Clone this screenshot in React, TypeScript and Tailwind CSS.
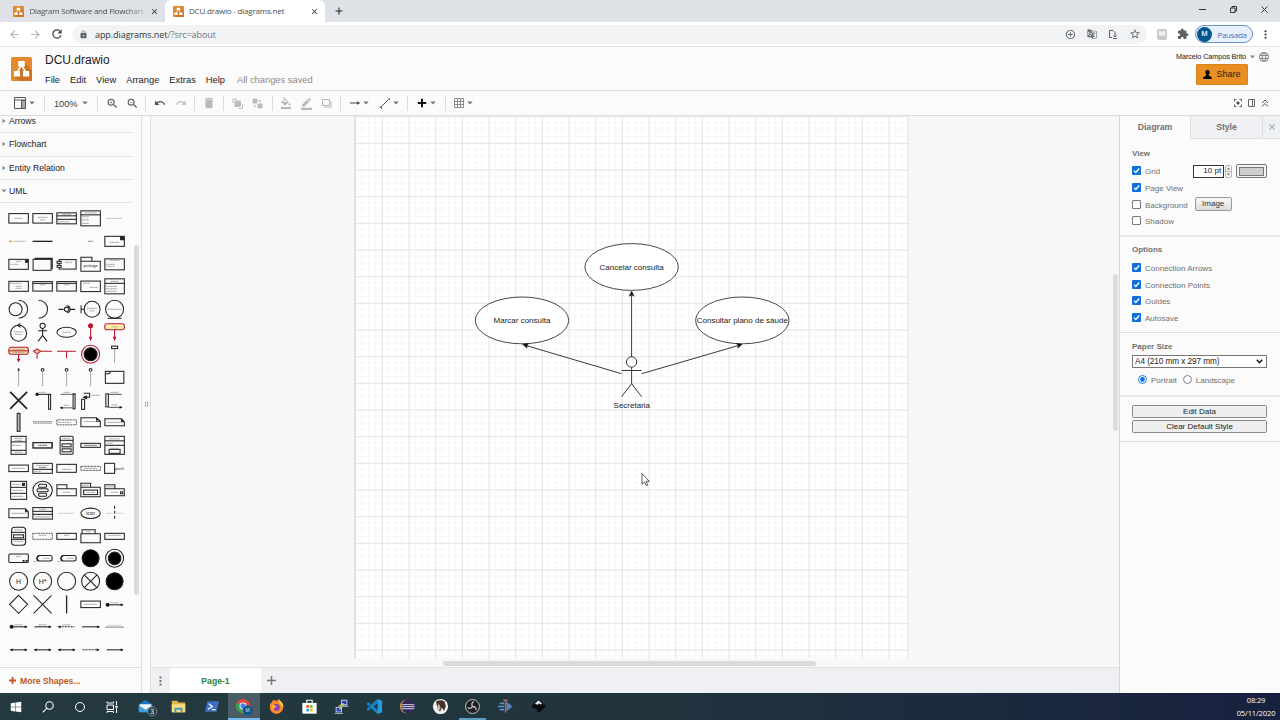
import React from 'react';
import {
  MdAddCircleOutline, MdArrowBack, MdArrowForward, MdClose, MdDelete, MdExtension,
  MdFormatColorFill, MdGTranslate, MdLock, MdMoreVert, MdRedo, MdRefresh, MdStarBorder,
  MdUndo, MdZoomIn, MdZoomOut, MdLanguage, MdAdd, MdBorderColor,
} from 'react-icons/md';
import { FaWindows } from 'react-icons/fa';

// ---------- Browser chrome ----------

const DrawioLogo = ({ className }: { className: string }) => (
  <svg viewBox="0 0 22 24" preserveAspectRatio="none" className={className}>
    <rect width="22" height="24" rx="1.500" fill="#e58a2c" />
    <path d="M14 5l8 9v8.500a1.500 1.500 0 0 1-1.500 1.500H8l-5-5z" fill="#cf7427" />
    <path d="M11 8L6 16M11 8l5 8" stroke="#fff" strokeWidth="1.600" />
    <rect x="7.500" y="4" width="7" height="5.500" rx=".6" fill="#fff" />
    <rect x="3" y="14" width="6.500" height="5.500" rx=".6" fill="#fff" />
    <rect x="12.500" y="14" width="6.500" height="5.500" rx=".6" fill="#fff" />
  </svg>
);

const TabBar = () => (
  <div className="flex h-[22px] shrink-0 bg-[#dee1e6] font-['Open_Sans',sans-serif] text-[8px] text-[#4b4f54]">
    <div className="flex w-[165px] items-center pl-[13px] pr-[6px]">
      <DrawioLogo className="h-[11px] w-[11px] shrink-0" />
      <span className="ml-[5.5px] whitespace-nowrap tracking-[-0.27px] [mask-image:linear-gradient(to_right,black_85%,rgba(0,0,0,0.3))]">
        Diagram Software and Flowchart
      </span>
      <MdClose className="ml-auto h-[9px] w-[9px] shrink-0 text-[#333]" />
    </div>
    <div className="flex w-[160px] items-center rounded-t-md bg-white pl-[8px] pr-[6px]">
      <DrawioLogo className="h-[11px] w-[11px] shrink-0" />
      <span className="ml-[5px] whitespace-nowrap tracking-[-0.2px]">DCU.drawio - diagrams.net</span>
      <MdClose className="ml-auto h-[9px] w-[9px] text-[#333]" />
    </div>
    <div className="flex items-center pl-[8px]">
      <MdAdd className="h-[12px] w-[12px] text-[#222]" />
    </div>
    <div className="ml-auto flex items-center gap-[22px] pb-[3px] pr-[11px]">
      <svg width="9" height="9" stroke="#333" fill="none"><path d="M1 4.500h7" /></svg>
      <svg width="9" height="9" stroke="#333" fill="none"><path d="M1.500 3h4.500v4.500H1.500zM3 3V1.500h4.500V6H6" /></svg>
      <svg width="9" height="9" stroke="#333" fill="none"><path d="M1.500 1.500l6 6M7.500 1.500l-6 6" /></svg>
    </div>
  </div>
);

const AddressBar = () => (
  <div className="flex h-[25px] shrink-0 items-center border-b border-[#e3e4e6] bg-white text-[#5f6368]">
    <MdArrowBack className="ml-[8px] h-[13px] w-[13px] text-[#b4b6b9]" />
    <MdArrowForward className="ml-[8px] h-[13px] w-[13px] text-[#b4b6b9]" />
    <MdRefresh className="ml-[8px] h-[14px] w-[14px] text-[#444]" />
    <div className="ml-[8px] flex h-[19px] w-[1075px] items-center rounded-full bg-[#f1f3f4] pl-[7px] pr-[6px]">
      <MdLock className="h-[9px] w-[9px]" />
      <span className="ml-[7px] pt-px font-['Open_Sans',sans-serif] text-[9px] tracking-[-0.07px] text-[#33363a]">
        app.diagrams.net<span className="text-[#73777c]">/?src=about</span>
      </span>
      <div className="ml-auto flex items-center gap-[11px]">
        <MdAddCircleOutline className="h-[11px] w-[11px]" />
        <MdGTranslate className="h-[10px] w-[10px]" />
        <svg width="10" height="10" fill="none" stroke="currentColor"><path d="M4 8.500H1.500v-7H5L7 3.500V5M7 5v3M5.500 6.500L7 8l1.500-1.500M5 9.500h4" /></svg>
        <MdStarBorder className="h-[12px] w-[12px]" />
      </div>
    </div>
    <div className="ml-[10px] flex h-[11px] w-[10px] items-center justify-center rounded-[2px] bg-[#c9c9c9] font-['Liberation_Sans',sans-serif] text-[8px] font-bold text-white">M</div>
    <MdExtension className="ml-[10px] h-[12px] w-[12px]" />
    <div className="ml-[6px] flex h-[18px] w-[58px] items-center rounded-full border border-[#6d92cb] bg-[#e8f0fb] pl-px">
      <div className="flex h-[15px] w-[15px] items-center justify-center rounded-full bg-[#03568f] font-['Open_Sans',sans-serif] text-[7px] font-semibold text-white">M</div>
      <span className="ml-[5.5px] pt-px font-['Open_Sans',sans-serif] text-[8px] tracking-[-0.4px] text-[#4a72bb]">Pausada</span>
    </div>
    <MdMoreVert className="ml-[6px] h-[13px] w-[13px] text-[#444]" />
  </div>
);

// ---------- App header ----------

const menus = ['File', 'Edit', 'View', 'Arrange', 'Extras', 'Help'];

const Header = () => (
  <div className="flex h-[44px] shrink-0 border-b border-[#dedede] bg-[#fbfbfb]">
    <DrawioLogo className="ml-[11px] mt-[10px] h-[24px] w-[21px]" />
    <div className="ml-[13px] pt-[6px]">
      <div className="text-[12px] leading-[14px] text-[#1b1b1b]">DCU.drawio</div>
      <div className="mt-[5.5px] flex gap-[10px] text-[9.33px] leading-[14px] text-[#222]">
        {menus.map((m) => (
          <span key={m}>{m}</span>
        ))}
        <span className="ml-[2px] text-[#8c8c8c]">All changes saved</span>
      </div>
    </div>
    <div className="ml-auto flex flex-col items-end pr-[10px] pt-[4px]">
      <div className="flex h-[11px] items-center text-[7.33px] text-[#222]">
        <span className="whitespace-nowrap pt-px tracking-[-0.13px]">Marcelo Campos Brito</span>
        <svg width="5" height="4" className="ml-[4px]"><path d="M0 .5h5L2.500 3.500z" fill="#888" /></svg>
        <MdLanguage className="ml-[3px] h-[12px] w-[12px] text-[#8a8a8a]" />
      </div>
      <button className="mr-[22px] mt-[2px] flex h-[21px] w-[52px] items-center justify-center gap-[4px] rounded-[1px] border border-[#d8841f] bg-[#e88e22] text-[9px] text-[#33230f]">
        <svg width="9" height="9" fill="#000"><path d="M4.500 0c1.600 0 2.300 1.200 2.100 2.500C6.500 3.700 6 4.300 5.700 4.800v1c1.300.5 3.300.8 3.300 3.200H0C0 6.600 2 6.300 3.300 5.800v-1C3 4.300 2.500 3.700 2.400 2.500 2.200 1.200 2.900 0 4.500 0z" /></svg>
        Share
      </button>
    </div>
  </div>
);

// ---------- Toolbar ----------

const Caret = ({ className = '' }: { className?: string }) => (
  <svg width="6" height="4" className={`shrink-0 ${className}`}><path d="M.3 .5h5.400L3 3.500z" fill="#777" /></svg>
);

const Sep = () => <div className="h-[15px] w-px shrink-0 bg-[#dcdcdc]" />;

const Toolbar = () => (
  <div className="flex h-[25px] shrink-0 items-center border-b border-[#dcdcdc] bg-[#fbfbfb] text-[#555]">
    <div className="flex w-[44px] items-center pl-[14px]">
      <svg width="12" height="12" fill="none" stroke="#555"><path d="M.5 .5h11v11H.500zM.5 3h11" /><path d="M7.500 3.500h4v8h-4z" fill="#aaa" /></svg>
      <Caret className="ml-[3px]" />
    </div>
    <Sep />
    <div className="flex w-[52px] items-center pl-[9px] text-[9.33px] text-[#444]">
      <span className="pt-[2px] leading-[11px] tracking-[-0.1px]">100%</span>
      <Caret className="ml-[5px]" />
    </div>
    <Sep />
    <div className="flex w-[47px] items-center gap-[7px] pl-[8px]">
      <MdZoomIn className="h-[13px] w-[13px]" />
      <MdZoomOut className="h-[13px] w-[13px]" />
    </div>
    <Sep />
    <div className="flex w-[48px] items-center gap-[9px] pl-[8px]">
      <MdUndo className="h-[12px] w-[12px]" />
      <MdRedo className="h-[12px] w-[12px] text-[#c4c4c4]" />
    </div>
    <Sep />
    <div className="flex w-[28px] items-center justify-center text-[#b9b9b9]">
      <MdDelete className="h-[14px] w-[14px]" />
    </div>
    <Sep />
    <div className="flex w-[48px] items-center gap-[9px] pl-[8px]">
      <svg width="11" height="11" fill="none" stroke="#bdbdbd"><path d="M3 3h5.500v5.500H3z" fill="#bdbdbd" /><path d="M1 5V1h4M10.500 6.500v4h-4" /></svg>
      <svg width="11" height="11" fill="none" stroke="#bdbdbd"><path d="M1 1h4v4H1zM6 6h4v4H6z" fill="#bdbdbd" /><path d="M6.500 2.500h2v2M2.500 6.500v2h2" /></svg>
    </div>
    <Sep />
    <div className="flex w-[67px] items-center gap-[8px] pl-[7px] text-[#b8b8b8]">
      <MdFormatColorFill className="h-[12px] w-[12px]" />
      <MdBorderColor className="h-[13px] w-[13px]" />
      <svg width="11" height="10" fill="none"><path d="M3 9h7V3" stroke="#cfcfcf" strokeWidth="1.500" /><path d="M1.500 1.500h7v6h-7z" stroke="#b5b5b5" /></svg>
    </div>
    <Sep />
    <div className="flex w-[66px] items-center pl-[9px]">
      <svg width="11" height="6" fill="#444"><path d="M0 2.500h8v.9H0zM7 1.200L10.300 3 7 4.800z" /></svg>
      <Caret className="ml-[2px]" />
      <svg width="11" height="11" className="ml-[10px]" stroke="#555" fill="none"><path d="M1.500 9.500l8-8" /><path d="M.5 9h2v2M8.500 0h2v2" strokeWidth=".8" /></svg>
      <Caret className="ml-[2.5px]" />
    </div>
    <Sep />
    <div className="flex w-[37px] items-center pl-[9px]">
      <svg width="10" height="10" stroke="#111" strokeWidth="2"><path d="M5 .8v8.400M.8 5h8.400" /></svg>
      <Caret className="ml-[3px]" />
    </div>
    <Sep />
    <div className="flex items-center pl-[8px]">
      <svg width="10" height="10" stroke="#777" fill="none"><path d="M.5 .5h9v9h-9zM3.500 .5v9M6.500 .5v9M.5 3.500h9M.5 6.500h9" strokeWidth=".8" /></svg>
      <Caret className="ml-[3px]" />
    </div>
    <div className="ml-auto flex items-center gap-[6px] pr-[11px]">
      <svg width="8" height="8" fill="none" stroke="#555"><path d="M.5 2.500v-2h2M5.500 .5h2v2M7.500 5.500v2h-2M2.500 7.500h-2v-2" /><path d="M3 3h2v2H3z" fill="#444" /></svg>
      <svg width="7" height="8" fill="none" stroke="#666"><path d="M.5 .5h6v7h-6zM4.500 .5v7" /></svg>
      <svg width="8" height="8" fill="none" stroke="#555"><path d="M1 4l3-3 3 3M1 7.500l3-3 3 3" /></svg>
    </div>
  </div>
);

// ---------- UML palette ----------

const Box = ({ x = 0, y = 0, w = 19.5, h = 9.5, ...rest }: any) => (
  <rect x={x - w / 2} y={y - h / 2} width={w} height={h} {...rest} />
);
// illegible caption inside a thumbnail
const Cap = ({ x = 0, y = 0, w = 8, c = '#888' }: { x?: number; y?: number; w?: number; c?: string }) => (
  <path d={`M${x - w / 2} ${y}h${w}`} stroke={c} strokeWidth=".8" strokeDasharray="1.300 .3" />
);
const Rule = ({ y, w = 19.5 }: { y: number; w?: number }) => <path d={`M${-w / 2} ${y}h${w}`} />;
const Txt = ({ s, size, y = 0, x = 0 }: { s: string; size: number; y?: number; x?: number }) => (
  <text x={x} y={y} fontSize={size} textAnchor="middle" stroke="none" fill="#222">{s}</text>
);
const Plain = () => <><Box /><Cap /></>;
const Arrow = ({ dot = false, left = false, right = true, dash = false, cap = true, w = 16 }: any) => (
  <>
    <path d={`M${-w / 2} .5h${w}`} strokeDasharray={dash ? '2 1' : undefined} />
    {dot && <circle cx={-w / 2 + 1} cy=".5" r="1.500" fill="#111" />}
    {left && <path d={`M${-w / 2 - 1} .5l3-1.300v2.600z`} fill="#111" stroke="none" />}
    {right && <path d={`M${w / 2 + 1} .5l-3-1.300v2.600z`} fill="#111" stroke="none" />}
    {cap && <Cap y={-1.5} w={8} />}
  </>
);
const Folder = ({ children }: { children?: React.ReactNode }) => (
  <><path d="M-9.700-1.500v-4h10v4M-9.700-1.500H9.700v7H-9.700z" />{children}</>
);
const red = '#b8142f';

const shapes: React.ReactNode[] = [
  // row 1
  <Plain />,
  <><Box /><Cap y={-1} w={10} /><Cap y={1.5} w={5} /></>,
  <><Box h={11} /><Rule y={-2.5} /><Rule y={1} /><Cap y={-4} w={9} /><Cap x={-3} y={3.500} w={11} /></>,
  <><Box h={15} /><Rule y={-3.5} /><Cap y={-5.5} w={12} /><Cap x={-5} y={-1.5} w={7} /><Cap x={-5} y={1.500} w={7} /><Cap x={-5} y={5} w={7} /></>,
  <Cap w={16} c="#aaa" />,
  // row 2
  <><circle cx="-8" r="1.200" fill="#d9a441" stroke="none" /><Cap x={1} w={13} c="#a89a80" /></>,
  <path d="M-10 0h20" strokeWidth="1.300" />,
  <></>,
  <Cap w={5} c="#555" />,
  <><Box h={10} /><path d="M6-4.500h3v3H6z" fill="#222" /><Cap y={1} w={9} /></>,
  // row 3
  <><Box h={10} /><path d="M7-4h2v2H7z" fill="#222" /><Cap y={-3} w={6} /><Cap x={-4} y={0} w={8} /></>,
  <><Box x={-.5} y={.5} w={18} h={11} /><path d="M-8-6H9.500v11" strokeWidth="1.400" /></>,
  <><Box x={1} w={17} /><Box x={-7.5} y={-2} w={4} h={2} fill="#fff" /><Box x={-7.5} y={2} w={4} h={2} fill="#fff" /><Cap x={2} y={-2} w={7} /></>,
  <><path d="M-9.700-3v-4h11v4M-9.700-3H9.700v10H-9.700z" /><Txt s="package" size={3.8} y={2.6} /></>,
  <><Box h={11} /><Cap y={-4} w={10} /><Cap x={-4} y={0} w={9} /><Cap x={-4} y={2} w={8} /></>,
  // row 4
  <><Box h={10} /><Cap x={-3} y={-3} w={12} /><Cap y={0} w={6} /><Cap y={2} w={6} /></>,
  <><Box /><Rule y={-3} /><Cap y={-1.5} w={6} /></>,
  <><Box /><Rule y={-3} /><Cap y={-1.5} w={6} /></>,
  <><Box h={10.500} /><Cap x={-4} y={-3} w={7} /><Cap x={3} y={1} w={8} /></>,
  <><Box h={15} /><Rule y={-3} /><Cap y={-5} w={8} /><Cap x={-3} y={0} w={11} /><Cap x={-3} y={2.500} w={11} /><Cap x={-3} y={5} w={10} /></>,
  // row 5
  <><circle cx="-3" r="6.500" /><path d="M0-9a9 9 0 0 1 0 18" /></>,
  <path d="M-4-9a9 9 0 0 1 0 18" />,
  <><path d="M-8 0h5M3.500 0h5" strokeWidth="1.300" /><circle r="2.200" /><path d="M0-3.500a3.500 3.500 0 0 1 0 7" /></>,
  <><circle cx="1.500" r="8" /><path d="M-6.500 0h-3M-9.500-4v8" /><Cap x={1.5} y={-1} w={10} /><Cap x={1.5} y={1.500} w={5} /></>,
  <><circle r="9" /><path d="M-7 9H7" /><Cap w={14} /></>,
  // row 6
  <><circle cy="1" r="8" /><path d="M2-9l-3 2 3 2" /><Cap y={-.5} w={9} /><Cap y={2} w={7} /></>,
  <><circle cy="-6.500" r="2.600" /><path d="M0-4v7M-4.500-1.500h9M0 3l-4.500 6M0 3l4.500 6" /></>,
  <><ellipse rx="9.700" ry="5" /><Cap w={8} /></>,
  <g stroke={red}><circle cy="-6.500" r="2" fill={red} /><path d="M0-5v11" /><path d="M0 7.500l-1-2.500h2z" fill={red} /></g>,
  <g stroke={red}><Box y={-5.5} h={6} rx={2} fill="#fff2a8" /><Cap y={-5.500} w={6} /><path d="M0-2.500v9" /><path d="M0 7.500l-1-2.500h2z" fill={red} /></g>,
  // row 7
  <g stroke={red}><Box y={-3.500} h={7} rx={2.5} fill="#ffe7a8" /><Cap y={-5} w={12} /><Rule y={-3.500} /><Cap y={-2} w={12} /><path d="M0 0v5" /><path d="M0 7l-1-2h2z" fill={red} /></g>,
  <g stroke={red}><path d="M-5.500-5.500l3.500 2.500-3.500 2.500L-9-3zM-2-3H9.500M-5.500-.5v5" fill="#f6c9a0" /></g>,
  <g stroke={red}><path d="M-9.500-3h19M0-3v7" /></g>,
  <><circle r="9" stroke={red} /><circle r="6.500" fill="#000" /></>,
  <><Box y={-7} w={6} h={2.500} /><path d="M0-5.500V9" stroke="#aaa" /></>,
  // row 8
  <><path d="M0-9v3" strokeWidth="1.500" /><path d="M0-5V9" stroke="#aaa" /></>,
  <><circle cy="-7.500" r="1.400" /><path d="M0-6V9" stroke="#aaa" /></>,
  <><circle cy="-7.500" r="1.400" /><path d="M0-6V9" stroke="#aaa" /></>,
  <><circle cy="-7.500" r="1.400" /><path d="M0-6V9" stroke="#aaa" /></>,
  <><Box w={18.500} h={12} /><path d="M-9-3.500h3.500L-4.500-5V-6" /></>,
  // row 9
  <path d="M-8.500-8.500l17 17M8.500-8.500l-17 17" strokeWidth="1.700" />,
  <><path d="M-6-6H6" /><circle cx="-5.500" cy="-6" r="1.200" fill="#111" /><Cap y={-8} w={7} /><Box x={7} y={1.500} w={2} h={15} /></>,
  <><path d="M-6-6H8M-6 7.500H6" strokeWidth=".7" /><path d="M-7 7.500l3-1.300v2.600z" fill="#111" stroke="none" /><Cap y={5} w={5} /><Cap y={-8} w={6} /><Box x={7.500} y={1} w={2} h={15} /></>,
  <><path d="M-7-7h6v4h-5" /><path d="M-7-3l3-1.300v2.600z" fill="#111" /><Box x={-7.500} y={4} w={3} h={10} /><Cap x={5} y={-5} w={9} /></>,
  <><path d="M-6-6H7M-6 7H7" strokeWidth=".8" /><path d="M8 7L5 5.700v2.600z" fill="#111" stroke="none" /><Cap y={-8} w={8} /><Cap y={4.500} w={6} /><Box x={-7.500} y={0} w={2.500} h={13} /></>,
  // row 10
  <Box w={2.8} h={18} fill="#bbb" />,
  <><Cap y={-.7} w={19} c="#666" /><Cap y={.8} w={19} c="#666" /></>,
  <><Box h={5} strokeDasharray="2 .6" strokeWidth=".7" /><Cap x={-2} w={13} /></>,
  <><path d="M-9.700-4.500H6l3.700 3.500v5.500H-9.700zM6-4.500V-1h3.700" /><Cap y={-.8} w={13} /></>,
  <><path d="M-9.700-3.500H7L9.700-.5v4H-9.700zM7-3.500v3h2.700" /><Cap y={0} w={14} /></>,
  // row 11
  <><Box w={15} h={18} /><Rule y={-3.500} w={15} /><Rule y={5} w={15} /><Cap y={-7} w={8} /><Cap y={-5} w={7} /><Cap x={-2} y={0} w={9} /><Cap y={7} w={8} /></>,
  <><Box h={5.500} /><Box w={17.500} h={5} strokeWidth=".6" /><Cap w={9} c="#333" /></>,
  <><Box w={13} h={18} rx={1} /><Cap y={-7} w={8} /><Rule y={-5} w={13} /><Box y={0} w={9} h={3} /><Box y={5} w={9} h={3} /></>,
  <><Box h={4} /><Cap w={13} c="#333" /></>,
  <><Box h={18} /><Cap y={-6.500} w={11} /><Rule y={-4.500} /><Cap x={-5} y={-2} w={6} /><Rule y={0} /><Box y={6} w={11} h={4} /><Cap y={3} w={8} /></>,
  // row 12
  <><Box h={6.500} /><Cap w={13} /></>,
  <><Box h={10} /><Cap y={-3} w={13} /><Cap y={-1} w={7} c="#333" /><Rule y={1} /><Cap x={-5} y={3} w={7} /></>,
  <><Box h={8} /><Cap y={1} w={9} /></>,
  <><Box h={4} strokeDasharray="2.500 .7" strokeWidth=".7" /><Cap w={13} /></>,
  <><Box x={-5} w={10} h={10} /><Txt s="port1" size={4} x={5} y={1.3} /></>,
  // row 13
  <><Box w={16} h={18} /><Rule y={-3} w={16} /><Rule y={3} w={16} /><Box x={5} y={-6} w={2} h={2} fill="#222" /><Cap x={-2} y={-6} w={9} /><Cap x={-1} y={0} w={11} /><Cap x={-1} y={6} w={11} /></>,
  <><ellipse rx="9.700" ry="9" /><Box y={-4.500} w={8} h={3} rx={1} /><Box y={0} w={11} h={3} rx={1} /><Box y={4.500} w={8} h={3} rx={1} /></>,
  <Folder><Cap y={2} w={7} /></Folder>,
  <><path d="M-9.700-3v-4H0v4M-9.700-3H9.700v9.500H-9.700z" /><Cap x={-5} y={-5} w={7} /><Box y={2} w={14} h={4.500} /><Cap y={2} w={9} /></>,
  <Folder><Cap y={2} w={7} /><Cap x={-4} y={-3.5} w={8} /><path d="M6 1.500h2v2H6z" /></Folder>,
  // row 14
  <><path d="M-9.700-4.500H7L9.700-1.500v6H-9.700zM7-4.500v3h2.700" /><Cap y={0} w={14} /></>,
  <><Box h={11.500} /><Rule y={-2} /><Rule y={1} /><Cap y={-4} w={7} /><Cap y={3.500} w={16} /></>,
  <Cap w={16} c="#bbb" />,
  <><ellipse rx="9.700" ry="5.200" /><Txt s="icon" size={4.8} y={1.6} /></>,
  <><path d="M0-7.500v15" strokeDasharray="3 2" /><Cap w={17} c="#bbb" /></>,
  // row 15
  <><Box w={14} h={18} rx={3} /><Rule y={-4} w={14} /><Box y={0} w={10} h={3} /><Rule y={3} w={14} /><Cap y={-6.500} w={8} /><Cap y={5} w={10} /></>,
  <><Box h={6} strokeDasharray="2 .6" strokeWidth=".7" /><Cap y={-1} w={8} /></>,
  <><Box h={6} /><Cap y={-1} w={5} /></>,
  <><path d="M-8.500-2.500V-6.500h13v4M-9.700-2.500H9.700v9H-9.700z" /><Cap x={-2} y={-4.500} w={5} /></>,
  <><Box h={6} /><Cap y={-1} w={13} /></>,
  // row 16
  <><Box h={8.500} rx={1} /><Cap y={-2} w={5} /><path d="M4 2.500h2M7 2.500h2" strokeWidth="1.600" /></>,
  <><Box x={2} w={15} h={5.500} rx={2} /><path d="M-3.500-2.500l-2.500 2.500 2.500 2.500" /><Cap x={4} w={7} /><Cap x={-7} y={3} w={4} /></>,
  <><Box x={2} w={15} h={5.500} rx={2} /><path d="M-3.500-2.500l-2.500 2.500 2.500 2.500" /><Cap x={4} w={7} /><Cap x={-7} y={3} w={4} /></>,
  <circle r="8.500" fill="#000" />,
  <><circle r="9" /><circle r="6.300" fill="#000" /></>,
  // row 17
  <><circle r="9" /><Txt s="H" size={7} y={2.5} /></>,
  <><circle r="9" /><Txt s="H*" size={7} y={2.5} /></>,
  <circle r="9" />,
  <><circle r="9" /><path d="M-6.400-6.400l12.800 12.800M6.400-6.400L-6.400 6.400" /></>,
  <circle r="8.500" fill="#000" />,
  // row 18
  <path d="M0-9l9 9-9 9-9-9z" />,
  <path d="M-9-9L9 9M9-9L-9 9" />,
  <path d="M0-9V9" strokeWidth="1.300" />,
  <><Box h={6.500} /><Cap w={13} /></>,
  <Arrow dot left />,
  // rows 19 and 20
  <Arrow dot />, <Arrow />, <Arrow left right={false} dash />, <Arrow cap={false} w={17} />, <><path d="M-9.500 .8h19" stroke="#888" /><Cap y={-1} w={14} c="#bbb" /></>,
  <Arrow left cap={false} />, <Arrow left cap={false} />, <Arrow left cap={false} />, <Arrow dash cap={false} />, <Arrow cap={false} />,
];

const Palette = () => (
  <div className="ml-[7px] mt-[4px] grid w-[120px] grid-cols-[repeat(5,24px)]">
    {shapes.map((s, i) => (
      <svg key={i} viewBox="-11.600 -11.340 24 22.680" className="h-[22.68px] w-[24px] overflow-visible" fill="none" stroke="#222" strokeWidth="1.050">
        {s}
      </svg>
    ))}
  </div>
);

const Sidebar = () => (
  <div className="flex w-[142px] shrink-0 flex-col border-r border-[#dedede] bg-[#fbfbfb]">
    <div className="flex h-[551px] overflow-hidden">
      <div className="-mt-[6px] w-[132px] shrink-0">
        {['Arrows', 'Flowchart', 'Entity Relation', 'UML'].map((name) => (
          <div key={name} className="flex h-[23.3px] items-center border-b border-[#e4e4e4] text-[8.67px] text-[#222]">
            <svg width="7" height="6" className="ml-[1px] mr-[1px]" fill="#888">
              {name === 'UML' ? <path d="M.5 1.500h5L3 4.500z" /> : <path d="M1.500 .7l3 2.300-3 2.300z" />}
            </svg>
            <span className="pt-px">{name}</span>
          </div>
        ))}
        <Palette />
      </div>
      <div className="ml-[2px] mt-[129px] h-[350px] w-[5px] rounded-full bg-[#dadada]" />
    </div>
    <div className="flex flex-1 items-center border-t border-[#dedede] pl-[9px] text-[8.67px] font-bold text-[#bf5a1e]">
      <svg width="7" height="7" stroke="currentColor" strokeWidth="1.800"><path d="M3.500 0v7M0 3.500h7" /></svg>
      <span className="ml-[4px] pt-[2px] tracking-[-0.05px]">More Shapes...</span>
    </div>
  </div>
);

// ---------- Diagram ----------

const UseCase = ({ x, y, label }: { x: number; y: number; label: string }) => (
  <g>
    <ellipse cx={x} cy={y} rx="46.700" ry="23.400" fill="#fff" stroke="#333" strokeWidth=".9" />
    <text x={x} y={y + 3} textAnchor="middle" fontSize="8" fill="#222">{label}</text>
  </g>
);

// viewBox uses window coordinates of the canvas area
const Canvas = () => (
  <svg viewBox="151 116 962 542" className="h-[542px] w-[962px]">
    <defs>
      <pattern id="grid" x="355.200" y="116.200" width="26.667" height="26.667" patternUnits="userSpaceOnUse">
        <path d="M6.670 0v26.670M13.330 0v26.670M20 0v26.670M0 6.670h26.670M0 13.330h26.670M0 20h26.670" stroke="#f5f5f5" strokeWidth=".9" />
        <path d="M.5 0v26.670M0 .5h26.670" stroke="#e3e3e3" strokeWidth="1" />
      </pattern>
    </defs>
    <rect x="355" y="116" width="553" height="542" fill="#fff" />
    <rect x="355" y="116" width="553" height="542" fill="url(#grid)" />
    <path d="M354.500 658V116M908 116v542" stroke="#dcdfdf" fill="none" />
    <UseCase x={631.6} y={267} label="Cancelar consulta" />
    <UseCase x={522} y={320.4} label="Marcar consulta" />
    <UseCase x={742.3} y={320.4} label="Consultar plano de sáude" />
    <g stroke="#222" strokeWidth=".9" fill="none">
      <path d="M631.600 357V294M621.500 373.700L526 345.500M641.700 373.700L738.500 345.500" />
      <path d="M631.600 291l-2.600 5.300 2.600-1.300 2.600 1.300zM522.500 344.300l4.500 4 .1-2.700 1.700-2.200zM742.300 344.300l-6-.9 1.700 2.200-.2 2.600z" fill="#111" strokeWidth=".4" />
      <circle cx="631.600" cy="362" r="5.200" fill="#fff" />
      <path d="M631.600 367.300v16.400M621.500 370.500h20.200M631.600 383.700l-10 13M631.600 383.700l10 13" />
    </g>
    <text x="631.800" y="408.300" textAnchor="middle" fontSize="8" fill="#222">Secretaria</text>
    <path d="M642 473.500v10.800l2.500-2.300 1.800 3.700 1.500-.7-1.700-3.600h3.200z" fill="#fff" stroke="#333" strokeWidth=".8" />
  </svg>
);

const Editor = () => (
  <div className="flex w-[977px] shrink-0 bg-[#fbfbfb]">
    {/* splitter grip */}
    <div className="flex w-[8px] items-center justify-center">
      <svg width="3" height="5" stroke="#888"><path d="M.5 0v5M2.500 0v5" strokeDasharray="1 .5" /></svg>
    </div>
    <div className="flex w-[969px] shrink-0 flex-col border-l border-[#dedede] bg-[#f7f9f8]">
      <div className="flex h-[542px]">
        <Canvas />
        <div className="mt-[158px] h-[157px] w-[5px] rounded-full bg-[#dcdedd]" />
      </div>
      <div className="flex h-[9px] items-center pt-[2px]">
        <div className="ml-[292px] h-[5px] w-[373px] rounded-full bg-[#d9dbdb]" />
      </div>
      <div className="flex flex-1 items-stretch border-t border-[#dfe1e3] bg-[#eef0f3]">
        <div className="flex w-[19px] items-center justify-center">
          <svg width="3" height="10" fill="#777"><path d="M.5 .5h2v2h-2zM.5 4h2v2h-2zM.5 7.500h2v2h-2z" /></svg>
        </div>
        <div className="flex w-[91px] items-center justify-center bg-white pt-px text-[8.67px] font-bold text-[#2b8243]">Page-1</div>
        <div className="flex w-[21px] items-center justify-center">
          <svg width="9" height="9" stroke="#777" strokeWidth="1.500"><path d="M4.500 0v9M0 4.500h9" /></svg>
        </div>
      </div>
    </div>
  </div>
);

// ---------- Format panel ----------

const Check = ({ on }: { on?: boolean }) =>
  on ? (
    <svg width="9" height="9" className="mb-px"><rect width="9" height="9" rx="1" fill="#0f6fdc" /><path d="M2 4.600l1.800 1.900L7.200 2.500" fill="none" stroke="#fff" strokeWidth="1.300" /></svg>
  ) : (
    <div className="mb-px h-[9px] w-[9px] rounded-[1px] border border-[#777] bg-white" />
  );

const Option = ({ label, on, children }: { label: string; on?: boolean; children?: React.ReactNode }) => (
  <div className="flex h-[16.7px] items-center">
    <Check on={on} />
    <span className="ml-[4px] pt-[2px]">{label}</span>
    {children}
  </div>
);

const Radio = ({ on }: { on?: boolean }) => (
  <svg width="9" height="9" className="mb-px" fill="#fff">
    <circle cx="4.500" cy="4.500" r="4" stroke={on ? '#0f6fdc' : '#777'} strokeWidth=".9" />
    {on && <circle cx="4.500" cy="4.500" r="2.400" fill="#0f6fdc" />}
  </svg>
);

const FormatPanel = () => (
  <div className="flex flex-1 flex-col border-l border-[#d5d5d5] bg-[#fbfbfb] text-[8px] text-[#707070]">
    <div className="flex h-[23px] shrink-0 text-[8.67px] font-bold">
      <div className="flex w-[71px] items-center justify-center border-r border-[#dfdfdf]">Diagram</div>
      <div className="flex w-[72px] items-center justify-center border-b border-r border-[#dcdfe3] bg-[#eef0f4]">Style</div>
      <div className="flex flex-1 items-center justify-center border-b border-[#dcdfe3] bg-[#eef0f4]">
        <svg width="6" height="6" stroke="#9db0c6" strokeWidth="1.200"><path d="M.5 .5l5 5M5.500 .5l-5 5" /></svg>
      </div>
    </div>
    <div className="h-[98px] border-b-2 border-[#e9e9e9] pl-[12px] pt-[9px]">
      <div className="mb-[4px] h-[11px] font-bold leading-[11px]">View</div>
      <Option label="Grid" on>
        <div className="ml-[33px] flex h-[13px] w-[31px] items-center justify-end border border-[#333] bg-white pr-[2px] text-[#222]">10 pt</div>
        <svg width="7" height="13" className="ml-[1px]" fill="#f4f4f4" stroke="#aaa" strokeWidth=".8"><rect x=".5" y=".5" width="6" height="12" rx="1.500" /><path d="M.5 6.500h6" /><path d="M2 4.500l1.500-2 1.500 2zM2 8.500l1.500 2 1.500-2z" fill="#666" stroke="none" /></svg>
        <div className="ml-[4px] flex h-[14px] w-[31px] items-center justify-center rounded-[2px] border border-[#777] bg-[#f4f4f4]">
          <div className="h-[9px] w-[25px] border border-[#777] bg-[#cfcfcf]" />
        </div>
      </Option>
      <Option label="Page View" on />
      <Option label="Background">
        <button className="mb-[2px] ml-[7px] flex h-[14px] w-[37px] items-center justify-center rounded-[2px] border border-[#999] bg-gradient-to-b from-[#f8f8f8] to-[#dcdcdc] text-[#333]">Image</button>
      </Option>
      <Option label="Shadow" />
    </div>
    <div className="h-[96px] border-b border-[#dedede] pl-[12px] pt-[7px]">
      <div className="mb-[4.5px] h-[11px] font-bold leading-[11px]">Options</div>
      <Option label="Connection Arrows" on />
      <Option label="Connection Points" on />
      <Option label="Guides" on />
      <Option label="Autosave" on />
    </div>
    <div className="h-[64px] border-b-2 border-[#e9e9e9] pl-[12px] pt-[8px]">
      <div className="mb-[3px] h-[11px] font-bold leading-[11px]">Paper Size</div>
      <div className="flex h-[13px] w-[135px] items-center justify-between border border-[#777] bg-white pl-[2px] pr-[3px] text-[8.200px] text-[#222]">
        <span className="pt-px tracking-[-0.05px]">A4 (210 mm x 297 mm)</span>
        <svg width="7" height="5" fill="none" stroke="#111" strokeWidth="1.500"><path d="M.8 .8L3.500 3.700 6.200 .8" /></svg>
      </div>
      <div className="ml-[6px] mt-[4px] flex h-[16px] items-center">
        <Radio on />
        <span className="ml-[4px] pt-px">Portrait</span>
        <span className="ml-[6px]" />
        <Radio />
        <span className="ml-[4px] pt-px">Landscape</span>
      </div>
    </div>
    <div className="flex h-[45px] flex-col gap-[2px] border-b border-[#dedede] pl-[12px] pt-[8px]">
      {['Edit Data', 'Clear Default Style'].map((b) => (
        <button key={b} className="h-[13px] w-[135px] rounded-[1.500px] border border-[#888] bg-[#efefef] text-[8px] leading-[11px] text-[#222]">{b}</button>
      ))}
    </div>
  </div>
);

// ---------- Windows taskbar ----------

const taskIcons: React.ReactNode[] = [
  // mail
  <><path d="M2 7l7-5 8 5v9H2z" fill="#1b74bd" /><path d="M3 7h13v4l-6.500 3L3 11z" fill="#f2f7fb" /><path d="M2 8l7.500 5L17 8v8H2z" fill="#3aa0e0" /><circle cx="17" cy="15" r="5" fill="#28373c" stroke="#98a2a5" strokeWidth=".8" /><text x="17" y="17.800" fontSize="7.500" textAnchor="middle" fill="#fff">3</text></>,
  // explorer
  <><path d="M2 3h6l1.500 2H17v11H2z" fill="#e5b544" /><path d="M2 7h15v9H2z" fill="#fbdc7b" /><path d="M5 16v-5h9v5h-2v-3H7v3z" fill="#4b95c4" /></>,
  // powershell
  <><path d="M5 3.500h13L15 15.500H2z" fill="#3c6fc4" /><path d="M6.500 6.500l4 3-5 3M10 13h4" stroke="#fff" strokeWidth="1.300" fill="none" /></>,
  // chrome
  <><circle cx="9" cy="9" r="8" fill="#e04b3b" /><path d="M9 9L2 5.200A8 8 0 0 0 8.500 17z" fill="#36a257" /><path d="M9 9h8a8 8 0 0 1-8.500 8z" fill="#f3c331" /><circle cx="9" cy="9" r="3.900" fill="#fff" /><circle cx="9" cy="9" r="3" fill="#4484e8" /><circle cx="14" cy="14" r="5.500" fill="#10578f" /><text x="14" y="16" fontSize="5.500" textAnchor="middle" fill="#dde">M</text></>,
  // firefox
  <><circle cx="9.500" cy="10" r="7.500" fill="#f2662f" /><path d="M2.500 6c1 1 2 0 3-4 2 2 8 1 10 5 3 5-1 10.500-6 10.500S1 13 2.500 6z" fill="#f98b2b" /><path d="M11 1c4 2 7 6 6 10C15 7 12 6 11 1z" fill="#ffcf3f" /><circle cx="9.500" cy="10.500" r="3.700" fill="#8a3fb4" /><path d="M4 8c3-1 4 1 6 1-1 2-4 1-3 4-2-1-3-3-3-5z" fill="#ffb52e" /></>,
  // store
  <><path d="M6.500 6V2.500h6V6" fill="none" stroke="#fff" strokeWidth="1.300" /><path d="M1.500 5.500h16v12h-16z" fill="#fff" /><path d="M6 8h3v3H6z" fill="#e9552c" /><path d="M10 8h3v3h-3z" fill="#7fb927" /><path d="M6 12h3v3H6z" fill="#2ba0dd" /><path d="M10 12h3v3h-3z" fill="#f5b61d" /></>,
  // putty
  <><path d="M9 2h7v6H9zM3 10h7v6H3z" fill="#cfd2dd" /><path d="M10 3h5v4h-5zM4 11h5v4H4z" fill="#2339c8" /><path d="M12 6l-5 3h4l-4 4" stroke="#f1dd35" strokeWidth="1.200" fill="none" /><path d="M8 8.500h9V10H8zM2 16.500h9V18H2z" fill="#9aa" /></>,
  // vscode
  <><path d="M13 1l5 2v13l-5 2-8.500-8.500zM13 5.500L8 9.500l5 4z" fill="#259ce0" fillRule="evenodd" /><path d="M1 6l2-1.200 10 8.700V18L1 7.500zM1 13l2 1.200L13 5.500V1L1 11.500z" fill="#1580c4" /></>,
  // eclipse
  <><circle cx="8.500" cy="9.500" r="7.500" fill="#e79a3c" /><circle cx="10" cy="9.500" r="7.700" fill="#33285e" /><path d="M3 7.500h14M2.500 9.700h15M3 12h14" stroke="#d9d7e8" strokeWidth="1.100" /></>,
  // dbeaver
  <><circle cx="9.500" cy="9.500" r="8.500" fill="#f3f1ee" /><path d="M4.500 4c3-2 7-2 9.500 0l1.500 5-2 5.500-2.500-4-2 5-3-4z" fill="#46322a" /><path d="M7.500 6l2 5-2 4-2-4z" fill="#cbb9a8" /></>,
  // obs
  <><circle cx="9.500" cy="9.500" r="7.800" fill="#1f1f22" stroke="#d4d4d4" /><path d="M9.500 9.500C8 7 9 4.500 11 4M9.500 9.500c3 0 4.500 2 4 4M9.500 9.500c-1.500 2.500-4 2.500-5.500 1" stroke="#ccc" strokeWidth="1.400" fill="none" /></>,
  // data tool
  <><path d="M3 6h5M1 9.500h7M3 13h5" stroke="#5b8fc7" strokeWidth="1.900" /><path d="M10.500 4l7 5.500-7 5.500z" fill="#5583b8" /><path d="M7 2.500h5M9.500 2.500v14" stroke="#b86a5f" strokeWidth="1.500" /></>,
  // inkscape
  <><path d="M9.500 1.500L17.500 9c1 1.500-2 2-4 2.500l2 1.500-3 1-2 2.500-3-2 1-2-5-1.500c-2-.5-2-1.500-1-2.500z" fill="#0b0b0b" /><path d="M9.500 2.500l4 4-2 .8-1.500-1.300L8.500 7.500 5.500 6.500z" fill="#e4e8ea" /></>,
];

const Taskbar = () => (
  <div className="flex h-[27px] shrink-0 items-stretch bg-gradient-to-r from-[#243a40] via-[#21343d] to-[#17213f] text-white">
    <div className="flex w-8 items-center justify-center"><FaWindows className="h-[12px] w-[12px]" /></div>
    <div className="flex w-8 items-center justify-center">
      <svg width="12" height="12" fill="none" stroke="#fff" strokeWidth="1.100"><circle cx="7.500" cy="4.500" r="3.700" /><path d="M5 7.200L.8 11.400" /></svg>
    </div>
    <div className="flex w-8 items-center justify-center"><div className="h-[10px] w-[10px] rounded-full border-[1.500px] border-white" /></div>
    <div className="flex w-8 items-center justify-center">
      <svg width="12" height="12" fill="none" stroke="#fff"><path d="M1 .5v1.500h6.500V.5M1 4h6.500v4.500H1zM1 12v-1.500h6.500V12M10.500 0v4M10.500 7v5" /><path d="M9.500 5h2v1.500h-2z" fill="#fff" strokeWidth=".4" /></svg>
    </div>
    <div className="ml-[1.500px] flex">
      {taskIcons.map((icon, i) => (
        <div
          key={i}
          className={`flex w-[32.7px] items-center justify-center ${i === 3 ? 'bg-[#4a5d64] shadow-[inset_0_-2px_0_#76b9ed]' : ''}`}
        >
          <div className={`flex h-full w-[27px] items-center justify-center ${i === 10 ? 'shadow-[inset_0_-2px_0_#5d9cc4]' : ''}`}>
            <svg viewBox="0 0 19 19" className="h-[17px] w-[17px] overflow-visible">{icon}</svg>
          </div>
        </div>
      ))}
    </div>
    <div className="ml-auto w-[48px] pt-[1px] text-center font-['Open_Sans',sans-serif] text-[7.500px] leading-[12.500px] tracking-[-0.12px]">
      <div>08:29</div>
      <div>05/11/2020</div>
    </div>
  </div>
);

const App: React.FC = () => (
  <div className="flex h-[720px] w-[1280px] flex-col overflow-hidden bg-white font-['Liberation_Sans',Arial,sans-serif]">
    <TabBar />
    <AddressBar />
    <Header />
    <Toolbar />
    <div className="flex h-[577px] shrink-0 bg-[#fbfbfb]">
      <Sidebar />
      <Editor />
      <FormatPanel />
    </div>
    <Taskbar />
  </div>
);

export default App;
